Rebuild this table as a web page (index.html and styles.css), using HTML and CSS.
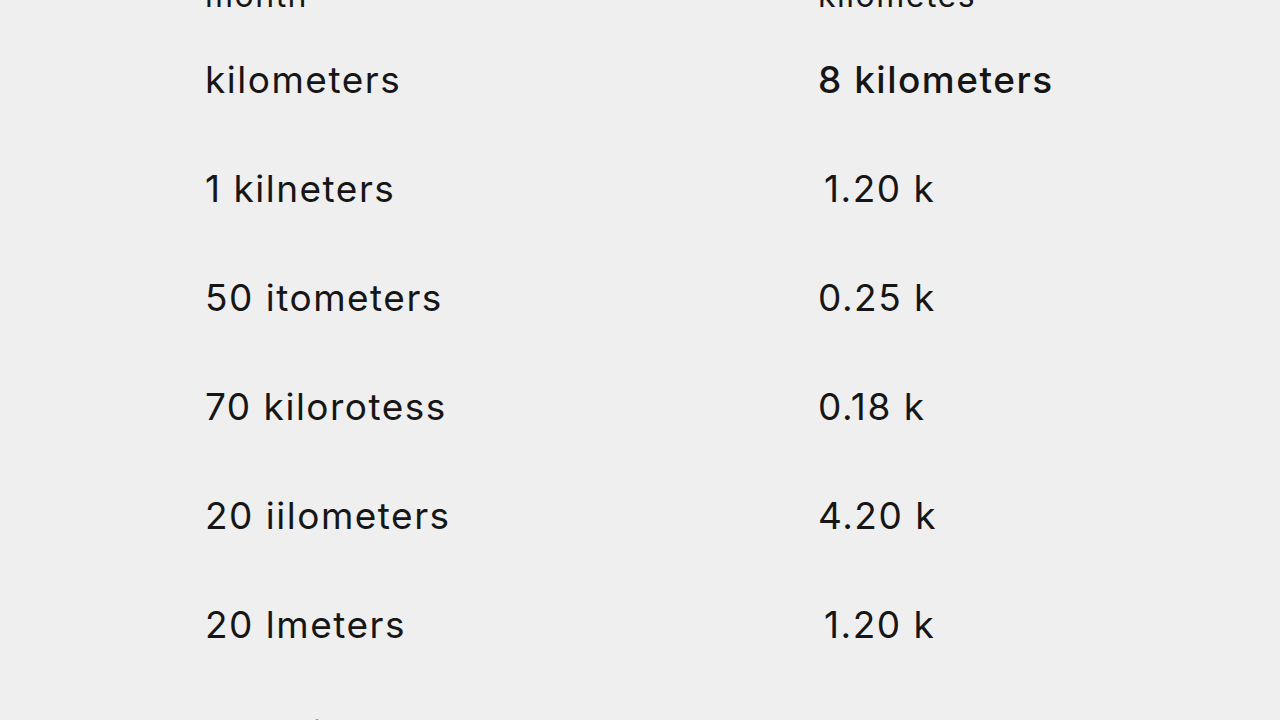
FILE: index.html
```html
<!DOCTYPE html>
<html lang="en">

<head>
  <meta charset="UTF-8">
  <meta name="viewport" content="width=device-width, initial-scale=1.0">
  <title>Distances</title>
  <link rel="stylesheet" href="styles.css">
</head>

<body>
  <section id="content">
    <!-- header row is mostly scrolled off the top -->
    <div class="row head">
      <span>month</span>
      <span>kilometes</span>
    </div>

    <div class="row">
      <span>kilometers</span>
      <span class="total">8 kilometers</span>
    </div>
    <div class="row">
      <span>1 kilneters</span>
      <span class="pad">1.20 k</span>
    </div>
    <div class="row">
      <span>50 itometers</span>
      <span>0.25 k</span>
    </div>
    <div class="row">
      <span>70 kilorotess</span>
      <span>0.18 k</span>
    </div>
    <div class="row">
      <span>20 iilometers</span>
      <span>4.20 k</span>
    </div>
    <div class="row">
      <span>20 lmeters</span>
      <span class="pad">1.20 k</span>
    </div>
    <div class="row">
      <span>200 kilometers</span>
      <span>0.50 k</span>
    </div>
  </section>
</body>

</html>
```

FILE: styles.css
```css
html,
body {
  margin: 0;
  height: 100%;
  overflow: hidden;
}

body {
  background: #efefef;
  color: #161616;
  font: 37px Inter, "Noto Sans", sans-serif;
  letter-spacing: 1.5px;
}

#content {
  margin-top: -35px;
  padding-left: 205px;
}

.row {
  display: grid;
  grid-template-columns: 613px auto;
  align-items: center;
  height: 109px;
}

.row.head {
  height: 60px;
  font-size: 32px;
}

.total {
  font-weight: 500;
}

.pad {
  padding-left: 6px;
}
```
